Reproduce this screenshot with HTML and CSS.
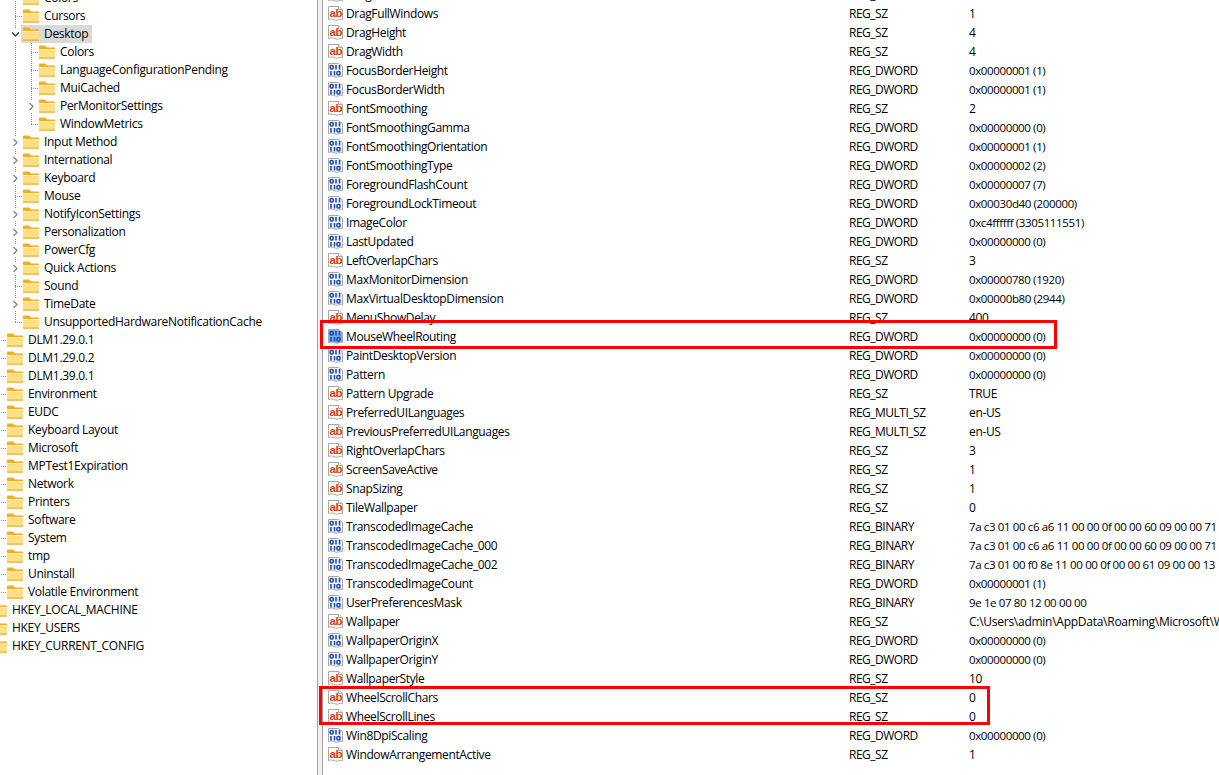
FILE: index.html
```html
<!DOCTYPE html>
<html lang="en">
<head>
<meta charset="utf-8">
<title>Registry Editor</title>
<link rel="stylesheet" href="styles.css">
</head>
<body>
<svg class="defs" aria-hidden="true">
<symbol id="f" viewBox="0 0 16 16"><path d="M0 2.500C0 2 .4 1.500 1 1.500h5l2 2h7c.6 0 1 .4 1 1v9c0 .6-.4 1-1 1H1c-.6 0-1-.4-1-1z" fill="#efae22"/><path d="M0 5h16v8.200c0 .5-.4.8-.8.8H.8c-.4 0-.8-.3-.8-.8z" fill="#ffdf85"/><path d="M0 5h16v1H0z" fill="#fff0b8"/><path d="M0 13.500h16v1H0z" fill="#e8ae35"/></symbol>
<symbol id="s" viewBox="0 0 17 17"><path d="M1.500 1.500H11.500L15.500 4.500V14.500C13 13.500 11 16 8.500 15C6 14 4 13.500 1.500 14.500Z" fill="var(--paper,#fff)" stroke="#a8a8a8"/><path d="M11.500 1.500V4.500H15.500" fill="#eee" stroke="#a8a8a8"/><text x="2.500" y="12" class="ab">ab</text></symbol>
<symbol id="d" viewBox="0 0 17 17"><path d="M1.500 1.500H11.500L15.500 4.500V14.500C13 13.500 11 16 8.500 15C6 14 4 13.500 1.500 14.500Z" fill="var(--paper,#fff)" stroke="#a8a8a8"/><g fill="none" stroke="#1a49b8" stroke-width="1.600"><rect x="3.200" y="3.500" width="3" height="3.500" rx="1"/><path d="M9 3V7.500M12.500 3V7.500M4 9V13.500M7.500 9V13.500"/><rect x="10" y="9.500" width="3" height="3.500" rx="1"/></g></symbol>
</svg>
<div class="window">
<nav class="tree">
<div class="node"><i class="g"></i><i class="stub"></i><svg class="fld"><use href="#f"/></svg><span class="lbl">Colors</span></div>
<div class="node"><i class="g"></i><i class="stub"></i><svg class="fld"><use href="#f"/></svg><span class="lbl">Cursors</span></div>
<div class="node"><i class="g"></i><i class="tw"><svg class="chev open" viewBox="0 0 9 9"><path d="M1 2.500L4.500 6L8 2.500"/></svg></i><span class="sel"><svg class="fld"><use href="#f"/></svg><span class="lbl">Desktop</span></span></div>
<div class="node"><i class="g"></i><i class="g"></i><i class="stub"></i><svg class="fld"><use href="#f"/></svg><span class="lbl">Colors</span></div>
<div class="node"><i class="g"></i><i class="g"></i><i class="stub"></i><svg class="fld"><use href="#f"/></svg><span class="lbl">LanguageConfigurationPending</span></div>
<div class="node"><i class="g"></i><i class="g"></i><i class="stub"></i><svg class="fld"><use href="#f"/></svg><span class="lbl">MuiCached</span></div>
<div class="node"><i class="g"></i><i class="g"></i><i class="tw"><svg class="chev" viewBox="0 0 9 9"><path d="M2.500 1L6 4.500L2.500 8"/></svg></i><svg class="fld"><use href="#f"/></svg><span class="lbl">PerMonitorSettings</span></div>
<div class="node"><i class="g"></i><i class="g"></i><i class="stub end"></i><svg class="fld"><use href="#f"/></svg><span class="lbl">WindowMetrics</span></div>
<div class="node"><i class="g"></i><i class="tw"><svg class="chev" viewBox="0 0 9 9"><path d="M2.500 1L6 4.500L2.500 8"/></svg></i><svg class="fld"><use href="#f"/></svg><span class="lbl">Input Method</span></div>
<div class="node"><i class="g"></i><i class="tw"><svg class="chev" viewBox="0 0 9 9"><path d="M2.500 1L6 4.500L2.500 8"/></svg></i><svg class="fld"><use href="#f"/></svg><span class="lbl">International</span></div>
<div class="node"><i class="g"></i><i class="tw"><svg class="chev" viewBox="0 0 9 9"><path d="M2.500 1L6 4.500L2.500 8"/></svg></i><svg class="fld"><use href="#f"/></svg><span class="lbl">Keyboard</span></div>
<div class="node"><i class="g"></i><i class="stub"></i><svg class="fld"><use href="#f"/></svg><span class="lbl">Mouse</span></div>
<div class="node"><i class="g"></i><i class="tw"><svg class="chev" viewBox="0 0 9 9"><path d="M2.500 1L6 4.500L2.500 8"/></svg></i><svg class="fld"><use href="#f"/></svg><span class="lbl">NotifyIconSettings</span></div>
<div class="node"><i class="g"></i><i class="tw"><svg class="chev" viewBox="0 0 9 9"><path d="M2.500 1L6 4.500L2.500 8"/></svg></i><svg class="fld"><use href="#f"/></svg><span class="lbl">Personalization</span></div>
<div class="node"><i class="g"></i><i class="tw"><svg class="chev" viewBox="0 0 9 9"><path d="M2.500 1L6 4.500L2.500 8"/></svg></i><svg class="fld"><use href="#f"/></svg><span class="lbl">PowerCfg</span></div>
<div class="node"><i class="g"></i><i class="tw"><svg class="chev" viewBox="0 0 9 9"><path d="M2.500 1L6 4.500L2.500 8"/></svg></i><svg class="fld"><use href="#f"/></svg><span class="lbl">Quick Actions</span></div>
<div class="node"><i class="g"></i><i class="stub"></i><svg class="fld"><use href="#f"/></svg><span class="lbl">Sound</span></div>
<div class="node"><i class="g"></i><i class="tw"><svg class="chev" viewBox="0 0 9 9"><path d="M2.500 1L6 4.500L2.500 8"/></svg></i><svg class="fld"><use href="#f"/></svg><span class="lbl">TimeDate</span></div>
<div class="node"><i class="g"></i><i class="stub end"></i><svg class="fld"><use href="#f"/></svg><span class="lbl">UnsupportedHardwareNotificationCache</span></div>
<div class="node"><i class="stub"></i><svg class="fld"><use href="#f"/></svg><span class="lbl">DLM1.29.0.1</span></div>
<div class="node"><i class="stub"></i><svg class="fld"><use href="#f"/></svg><span class="lbl">DLM1.29.0.2</span></div>
<div class="node"><i class="stub"></i><svg class="fld"><use href="#f"/></svg><span class="lbl">DLM1.39.0.1</span></div>
<div class="node"><i class="stub"></i><svg class="fld"><use href="#f"/></svg><span class="lbl">Environment</span></div>
<div class="node"><i class="stub"></i><svg class="fld"><use href="#f"/></svg><span class="lbl">EUDC</span></div>
<div class="node"><i class="stub"></i><svg class="fld"><use href="#f"/></svg><span class="lbl">Keyboard Layout</span></div>
<div class="node"><i class="stub"></i><svg class="fld"><use href="#f"/></svg><span class="lbl">Microsoft</span></div>
<div class="node"><i class="stub"></i><svg class="fld"><use href="#f"/></svg><span class="lbl">MPTest1Expiration</span></div>
<div class="node"><i class="stub"></i><svg class="fld"><use href="#f"/></svg><span class="lbl">Network</span></div>
<div class="node"><i class="stub"></i><svg class="fld"><use href="#f"/></svg><span class="lbl">Printers</span></div>
<div class="node"><i class="stub"></i><svg class="fld"><use href="#f"/></svg><span class="lbl">Software</span></div>
<div class="node"><i class="stub"></i><svg class="fld"><use href="#f"/></svg><span class="lbl">System</span></div>
<div class="node"><i class="stub"></i><svg class="fld"><use href="#f"/></svg><span class="lbl">tmp</span></div>
<div class="node"><i class="stub"></i><svg class="fld"><use href="#f"/></svg><span class="lbl">Uninstall</span></div>
<div class="node"><i class="stub end"></i><svg class="fld"><use href="#f"/></svg><span class="lbl">Volatile Environment</span></div>
<div class="node"><svg class="fld"><use href="#f"/></svg><span class="lbl">HKEY_LOCAL_MACHINE</span></div>
<div class="node"><svg class="fld"><use href="#f"/></svg><span class="lbl">HKEY_USERS</span></div>
<div class="node"><svg class="fld"><use href="#f"/></svg><span class="lbl">HKEY_CURRENT_CONFIG</span></div>
</nav>
<div class="split"></div>
<main class="list">
<div class="row"><svg class="ic"><use href="#s"/></svg><span>DragFromMaximize</span><span class="ty">REG_SZ</span><span>1</span></div>
<div class="row"><svg class="ic"><use href="#s"/></svg><span>DragFullWindows</span><span class="ty">REG_SZ</span><span>1</span></div>
<div class="row"><svg class="ic"><use href="#s"/></svg><span>DragHeight</span><span class="ty">REG_SZ</span><span>4</span></div>
<div class="row"><svg class="ic"><use href="#s"/></svg><span>DragWidth</span><span class="ty">REG_SZ</span><span>4</span></div>
<div class="row"><svg class="ic"><use href="#d"/></svg><span>FocusBorderHeight</span><span class="ty">REG_DWORD</span><span class="hex">0x00000001 (1)</span></div>
<div class="row"><svg class="ic"><use href="#d"/></svg><span>FocusBorderWidth</span><span class="ty">REG_DWORD</span><span class="hex">0x00000001 (1)</span></div>
<div class="row"><svg class="ic"><use href="#s"/></svg><span>FontSmoothing</span><span class="ty">REG_SZ</span><span>2</span></div>
<div class="row"><svg class="ic"><use href="#d"/></svg><span>FontSmoothingGamma</span><span class="ty">REG_DWORD</span><span class="hex">0x00000000 (0)</span></div>
<div class="row"><svg class="ic"><use href="#d"/></svg><span>FontSmoothingOrientation</span><span class="ty">REG_DWORD</span><span class="hex">0x00000001 (1)</span></div>
<div class="row"><svg class="ic"><use href="#d"/></svg><span>FontSmoothingType</span><span class="ty">REG_DWORD</span><span class="hex">0x00000002 (2)</span></div>
<div class="row"><svg class="ic"><use href="#d"/></svg><span>ForegroundFlashCount</span><span class="ty">REG_DWORD</span><span class="hex">0x00000007 (7)</span></div>
<div class="row"><svg class="ic"><use href="#d"/></svg><span>ForegroundLockTimeout</span><span class="ty">REG_DWORD</span><span class="hex">0x00030d40 (200000)</span></div>
<div class="row"><svg class="ic"><use href="#d"/></svg><span>ImageColor</span><span class="ty">REG_DWORD</span><span class="hex">0xc4ffffff (3305111551)</span></div>
<div class="row"><svg class="ic"><use href="#d"/></svg><span>LastUpdated</span><span class="ty">REG_DWORD</span><span class="hex">0x00000000 (0)</span></div>
<div class="row"><svg class="ic"><use href="#s"/></svg><span>LeftOverlapChars</span><span class="ty">REG_SZ</span><span>3</span></div>
<div class="row"><svg class="ic"><use href="#d"/></svg><span>MaxMonitorDimension</span><span class="ty">REG_DWORD</span><span class="hex">0x00000780 (1920)</span></div>
<div class="row"><svg class="ic"><use href="#d"/></svg><span>MaxVirtualDesktopDimension</span><span class="ty">REG_DWORD</span><span class="hex">0x00000b80 (2944)</span></div>
<div class="row"><svg class="ic"><use href="#s"/></svg><span>MenuShowDelay</span><span class="ty">REG_SZ</span><span>400</span></div>
<div class="row"><svg class="ic hot"><use href="#d"/></svg><span>MouseWheelRouting</span><span class="ty">REG_DWORD</span><span class="hex">0x00000000 (0)</span></div>
<div class="row"><svg class="ic"><use href="#d"/></svg><span>PaintDesktopVersion</span><span class="ty">REG_DWORD</span><span class="hex">0x00000000 (0)</span></div>
<div class="row"><svg class="ic"><use href="#d"/></svg><span>Pattern</span><span class="ty">REG_DWORD</span><span class="hex">0x00000000 (0)</span></div>
<div class="row"><svg class="ic"><use href="#s"/></svg><span>Pattern Upgrade</span><span class="ty">REG_SZ</span><span>TRUE</span></div>
<div class="row"><svg class="ic"><use href="#s"/></svg><span>PreferredUILanguages</span><span class="ty">REG_MULTI_SZ</span><span>en-US</span></div>
<div class="row"><svg class="ic"><use href="#s"/></svg><span>PreviousPreferredUILanguages</span><span class="ty">REG_MULTI_SZ</span><span>en-US</span></div>
<div class="row"><svg class="ic"><use href="#s"/></svg><span>RightOverlapChars</span><span class="ty">REG_SZ</span><span>3</span></div>
<div class="row"><svg class="ic"><use href="#s"/></svg><span>ScreenSaveActive</span><span class="ty">REG_SZ</span><span>1</span></div>
<div class="row"><svg class="ic"><use href="#s"/></svg><span>SnapSizing</span><span class="ty">REG_SZ</span><span>1</span></div>
<div class="row"><svg class="ic"><use href="#s"/></svg><span>TileWallpaper</span><span class="ty">REG_SZ</span><span>0</span></div>
<div class="row"><svg class="ic"><use href="#d"/></svg><span>TranscodedImageCache</span><span class="ty">REG_BINARY</span><span class="hex">7a c3 01 00 c6 a6 11 00 00 0f 00 00 60 09 00 00 71</span></div>
<div class="row"><svg class="ic"><use href="#d"/></svg><span>TranscodedImageCache_000</span><span class="ty">REG_BINARY</span><span class="hex">7a c3 01 00 c6 a6 11 00 00 0f 00 00 60 09 00 00 71</span></div>
<div class="row"><svg class="ic"><use href="#d"/></svg><span>TranscodedImageCache_002</span><span class="ty">REG_BINARY</span><span class="hex">7a c3 01 00 f0 8e 11 00 00 0f 00 00 61 09 00 00 13</span></div>
<div class="row"><svg class="ic"><use href="#d"/></svg><span>TranscodedImageCount</span><span class="ty">REG_DWORD</span><span class="hex">0x00000001 (1)</span></div>
<div class="row"><svg class="ic"><use href="#d"/></svg><span>UserPreferencesMask</span><span class="ty">REG_BINARY</span><span class="hex">9e 1e 07 80 12 00 00 00</span></div>
<div class="row"><svg class="ic"><use href="#s"/></svg><span>Wallpaper</span><span class="ty">REG_SZ</span><span class="path">C:\Users\admin\AppData\Roaming\Microsoft\Windows</span></div>
<div class="row"><svg class="ic"><use href="#d"/></svg><span>WallpaperOriginX</span><span class="ty">REG_DWORD</span><span class="hex">0x00000000 (0)</span></div>
<div class="row"><svg class="ic"><use href="#d"/></svg><span>WallpaperOriginY</span><span class="ty">REG_DWORD</span><span class="hex">0x00000000 (0)</span></div>
<div class="row"><svg class="ic"><use href="#s"/></svg><span>WallpaperStyle</span><span class="ty">REG_SZ</span><span>10</span></div>
<div class="row"><svg class="ic"><use href="#s"/></svg><span>WheelScrollChars</span><span class="ty">REG_SZ</span><span>0</span></div>
<div class="row"><svg class="ic"><use href="#s"/></svg><span>WheelScrollLines</span><span class="ty">REG_SZ</span><span>0</span></div>
<div class="row"><svg class="ic"><use href="#d"/></svg><span>Win8DpiScaling</span><span class="ty">REG_DWORD</span><span class="hex">0x00000000 (0)</span></div>
<div class="row"><svg class="ic"><use href="#s"/></svg><span>WindowArrangementActive</span><span class="ty">REG_SZ</span><span>1</span></div>
</main>
<div class="mark mark-routing"></div>
<div class="mark mark-wheel"></div>
</div>
</body>
</html>
```
FILE: styles.css
```css
* { box-sizing: border-box; }
html, body { margin: 0; height: 100%; overflow: hidden; background: #fff; }
body { font: 12px/18px "Open Sans", "Noto Sans", sans-serif; color: #000; }
.defs { position: absolute; width: 0; height: 0; }
.ab { font: bold 11.5px "Liberation Sans", sans-serif; fill: #d63c14; }
.window { position: relative; display: flex; height: 775px; overflow: hidden; background: #f0f0f0; }

.tree { flex: 0 0 318px; height: 100%; overflow: hidden; background: #fff; border-right: 1px solid #a0a0a0; }
.tree > :first-child { margin-top: -11px; }
.node { display: flex; align-items: center; height: 18px; margin-left: -9px; white-space: nowrap; }
.node i { flex: 0 0 16px; height: 18px; display: flex; align-items: center; justify-content: center;
  background: repeating-linear-gradient(to bottom, #8f8f8f 0 1px, transparent 1px 2px) 8px 0 / 1px 100% no-repeat; }
.node i.stub { background:
  repeating-linear-gradient(to bottom, #8f8f8f 0 1px, transparent 1px 2px) 8px 0 / 1px 100% no-repeat,
  repeating-linear-gradient(to right, #8f8f8f 0 1px, transparent 1px 2px) 8px 9px / 8px 1px no-repeat; }
.node i.stub.end { background:
  repeating-linear-gradient(to bottom, #8f8f8f 0 1px, transparent 1px 2px) 8px 0 / 1px 50% no-repeat,
  repeating-linear-gradient(to right, #8f8f8f 0 1px, transparent 1px 2px) 8px 9px / 8px 1px no-repeat; }
.chev { width: 9px; height: 11px; background: #fff; fill: none; stroke: #8a8a8a; stroke-width: 1.4; }
.chev.open { stroke: #404040; }
.fld { flex: 0 0 16px; width: 16px; height: 16px; }
.lbl { margin-left: 5px; letter-spacing: -0.3px; }
.sel { display: flex; align-items: center; height: 18px; margin-left: -2px; padding: 0 4px 0 2px; background: #d9d9d9; }

.split { flex: 0 0 4px; }
.list { flex: 1; min-width: 0; overflow: hidden; background: #fff; border-left: 1px solid #a0a0a0; padding-left: 5px; }
.row { display: grid; grid-template-columns: 18px 503px 120px 1fr; align-items: center; height: 19px; line-height: 19px; white-space: nowrap; letter-spacing: -0.36px; }
.row:first-child { margin-top: -15px; }
.row span { overflow: hidden; }
.row .ty { letter-spacing: -0.5px; }
.row .hex { font-size: 11.5px; letter-spacing: -0.37px; }
.row .path { letter-spacing: -0.26px; }
.ic { width: 17px; height: 17px; margin-left: -1px; }
.hot { --paper: #78b0e8; }

.mark { position: absolute; border: 3px solid #f00; pointer-events: none; }
.mark-routing { left: 320px; top: 320px; width: 737px; height: 29px; }
.mark-wheel { left: 319px; top: 686px; width: 671px; height: 39px; }
```
